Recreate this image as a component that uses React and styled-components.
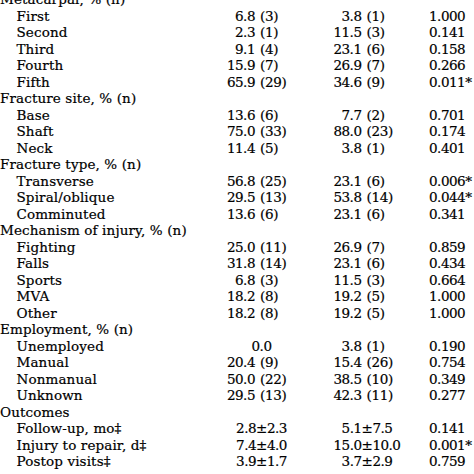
import React from "react";
import styled, { createGlobalStyle } from "styled-components";

const Global = createGlobalStyle`
  html, body { margin: 0; padding: 0; background: #fff; }
  body { overflow: hidden; }
`;

const Table = styled.div`
  margin-top: -9px;
  width: 474px;
  font-family: "DejaVu Serif", "Liberation Serif", serif;
  font-size: 13.5px;
  color: #000;
  -webkit-text-stroke: 0.2px #000;
`;

const Row = styled.div`
  display: grid;
  grid-template-columns: 207.5px 50px 50px 56.5px 56.5px 1fr;
  height: 16.5px;
  line-height: 16.5px;
  white-space: nowrap;
`;

const Label = styled.div`
  padding-left: ${(p) => (p.$sub ? "16.5px" : "0")};
  letter-spacing: 0.12px;
`;

const Num = styled.div`
  text-align: right;
  padding-right: 2.5px;
  letter-spacing: -0.5px;
`;

const Paren = styled.div`
  text-align: left;
  padding-left: 2.5px;
  letter-spacing: -0.35px;
`;

const Centered = styled.div`
  grid-column: span 2;
  text-align: center;
  padding-left: ${(p) => p.$shift}px;
  letter-spacing: -0.5px;
`;

const PValue = styled.div`
  padding-left: 8.5px;
  letter-spacing: -0.5px;
`;

const rows = [
  { h: "Metacarpal, % (n)" },
  { l: "First", a: ["6.8", "(3)"], b: ["3.8", "(1)"], p: "1.000" },
  { l: "Second", a: ["2.3", "(1)"], b: ["11.5", "(3)"], p: "0.141" },
  { l: "Third", a: ["9.1", "(4)"], b: ["23.1", "(6)"], p: "0.158" },
  { l: "Fourth", a: ["15.9", "(7)"], b: ["26.9", "(7)"], p: "0.266" },
  { l: "Fifth", a: ["65.9", "(29)"], b: ["34.6", "(9)"], p: "0.011*" },
  { h: "Fracture site, % (n)" },
  { l: "Base", a: ["13.6", "(6)"], b: ["7.7", "(2)"], p: "0.701" },
  { l: "Shaft", a: ["75.0", "(33)"], b: ["88.0", "(23)"], p: "0.174" },
  { l: "Neck", a: ["11.4", "(5)"], b: ["3.8", "(1)"], p: "0.401" },
  { h: "Fracture type, % (n)" },
  { l: "Transverse", a: ["56.8", "(25)"], b: ["23.1", "(6)"], p: "0.006*" },
  { l: "Spiral/oblique", a: ["29.5", "(13)"], b: ["53.8", "(14)"], p: "0.044*" },
  { l: "Comminuted", a: ["13.6", "(6)"], b: ["23.1", "(6)"], p: "0.341" },
  { h: "Mechanism of injury, % (n)" },
  { l: "Fighting", a: ["25.0", "(11)"], b: ["26.9", "(7)"], p: "0.859" },
  { l: "Falls", a: ["31.8", "(14)"], b: ["23.1", "(6)"], p: "0.434" },
  { l: "Sports", a: ["6.8", "(3)"], b: ["11.5", "(3)"], p: "0.664" },
  { l: "MVA", a: ["18.2", "(8)"], b: ["19.2", "(5)"], p: "1.000" },
  { l: "Other", a: ["18.2", "(8)"], b: ["19.2", "(5)"], p: "1.000" },
  { h: "Employment, % (n)" },
  { l: "Unemployed", a: "0.0", b: ["3.8", "(1)"], p: "0.190" },
  { l: "Manual", a: ["20.4", "(9)"], b: ["15.4", "(26)"], p: "0.754" },
  { l: "Nonmanual", a: ["50.0", "(22)"], b: ["38.5", "(10)"], p: "0.349" },
  { l: "Unknown", a: ["29.5", "(13)"], b: ["42.3", "(11)"], p: "0.277" },
  { h: "Outcomes" },
  { l: "Follow-up, mo‡", a: "2.8\u00b12.3", b: "5.1\u00b17.5", p: "0.141" },
  { l: "Injury to repair, d‡", a: "7.4\u00b14.0", b: "15.0\u00b110.0", p: "0.001*" },
  { l: "Postop visits‡", a: "3.9\u00b11.7", b: "3.7\u00b12.9", p: "0.759" },
];

function Value({ v, shift }) {
  if (typeof v === "string") return <Centered $shift={shift}>{v}</Centered>;
  return (
    <>
      <Num>{v[0]}</Num>
      <Paren>{v[1]}</Paren>
    </>
  );
}

export default function App() {
  return (
    <>
      <Global />
      <Table>
        {rows.map((r, i) =>
          r.h ? (
            <Row key={i}>
              <Label>{r.h}</Label>
            </Row>
          ) : (
            <Row key={i}>
              <Label $sub>{r.l}</Label>
              <Value v={r.a} shift={8} />
              <Value v={r.b} shift={6} />
              <PValue>{r.p}</PValue>
            </Row>
          )
        )}
      </Table>
    </>
  );
}
